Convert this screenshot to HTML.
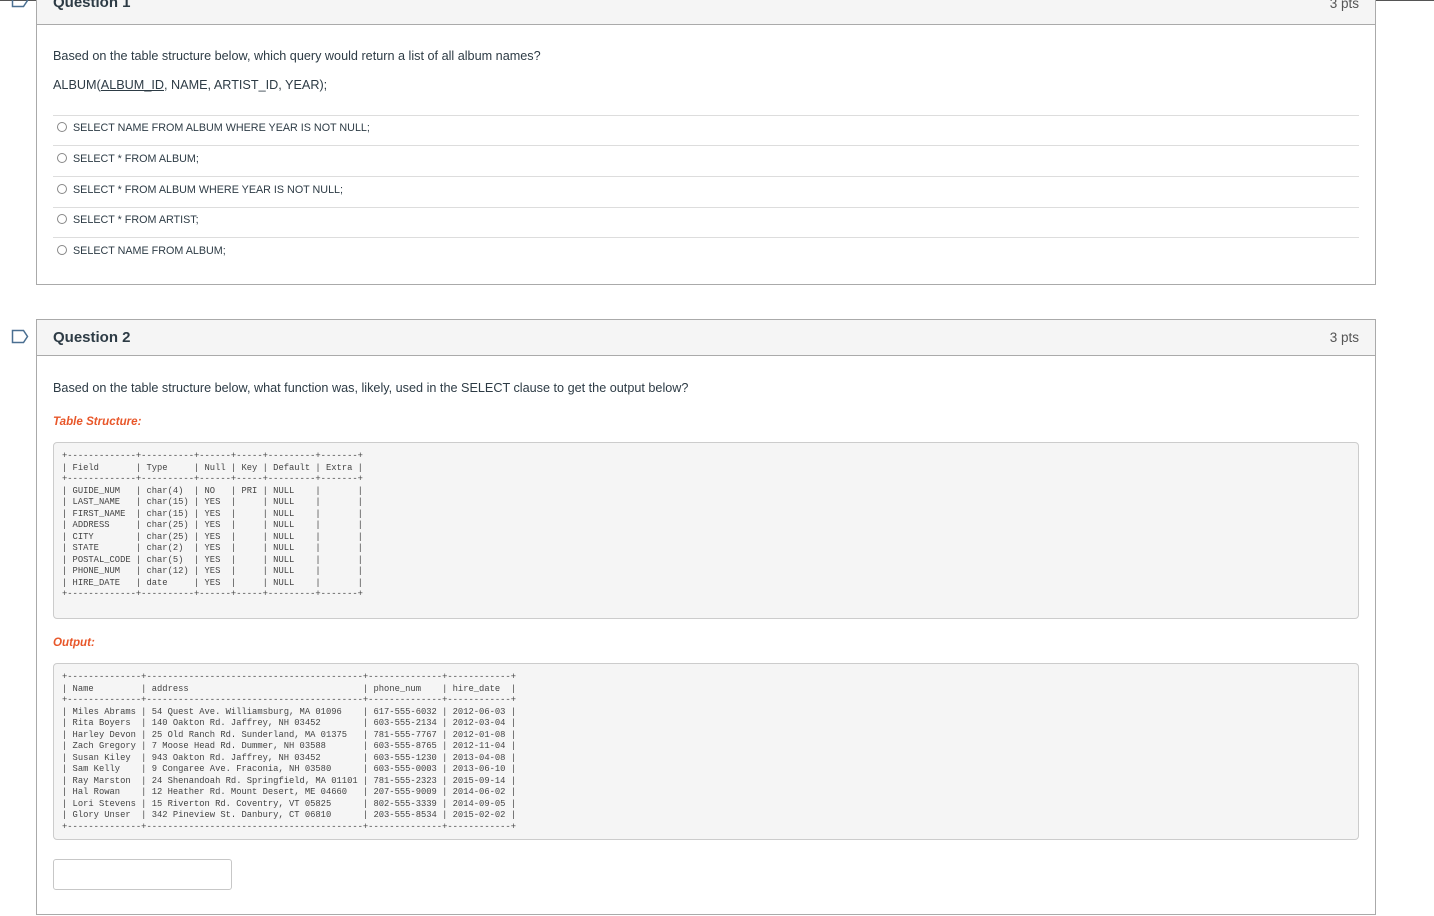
<!DOCTYPE html>
<html><head><meta charset="utf-8"><style>
*{margin:0;padding:0;box-sizing:border-box}
body{width:1434px;height:916px;background:#fff;position:relative;overflow:hidden;font-family:"Liberation Sans",sans-serif;color:#2d3b45}
.abs{position:absolute}
.box{position:absolute;left:36px;width:1340px;border:1px solid #aaa;background:#fff}
.hdr{position:absolute;left:0;right:0;top:0;background:#f5f5f5;border-bottom:1px solid #aaa}
.title{position:absolute;left:16px;font-size:15px;font-weight:bold;color:#2d3b45}
.pts{position:absolute;right:16px;font-size:13.5px;color:#555}
.txt{position:absolute;font-size:12.65px;color:#2d3b45;white-space:nowrap}
.sep{position:absolute;left:53px;width:1306px;height:1px;background:#ddd}
.opt{position:absolute;left:57px;font-size:10.75px;white-space:nowrap;color:#2d3b45}
.opt i{display:inline-block;width:10px;height:10px;border:1px solid #888;border-radius:50%;vertical-align:-1px;margin-right:6px}
.pre{position:absolute;left:53px;width:1306px;background:#f5f5f5;border:1px solid #ccc;border-radius:4px}
pre{position:absolute;left:8px;font-family:"Liberation Mono",monospace;font-size:8.8px;line-height:11.5px;color:#444}
.red{position:absolute;left:53px;color:#e8572a;font-style:italic;font-weight:bold;font-size:11.6px}
</style></head><body>
<div class="abs" style="left:0;top:0;width:1434px;height:1px;background:#555"></div>
<svg class="abs" style="left:11px;top:-7px" width="18" height="15"><path d="M1.5 1.5h11l4 6-4 6h-11z" fill="none" stroke="#4a6f91" stroke-width="1.5"/></svg>
<div class="box" style="top:-14px;height:299px">
 <div class="hdr" style="height:38px"><div class="title" style="top:7px">Question 1</div><div class="pts" style="top:9px">3 pts</div></div>
</div>
<div class="txt" style="left:53px;top:49px">Based on the table structure below, which query would return a list of all album names?</div>
<div class="txt" style="left:53px;top:78px">ALBUM(<u>ALBUM_ID</u>, NAME, ARTIST_ID, YEAR);</div>
<div class="sep" style="top:115px"></div>
<div class="opt" style="top:122px"><i></i>SELECT NAME FROM ALBUM WHERE YEAR IS NOT NULL;</div>
<div class="sep" style="top:145px"></div>
<div class="opt" style="top:153px"><i></i>SELECT * FROM ALBUM;</div>
<div class="sep" style="top:176px"></div>
<div class="opt" style="top:184px"><i></i>SELECT * FROM ALBUM WHERE YEAR IS NOT NULL;</div>
<div class="sep" style="top:207px"></div>
<div class="opt" style="top:214px"><i></i>SELECT * FROM ARTIST;</div>
<div class="sep" style="top:237px"></div>
<div class="opt" style="top:245px"><i></i>SELECT NAME FROM ALBUM;</div>

<svg class="abs" style="left:11px;top:329px" width="18" height="15"><path d="M1.5 1.5h11l4 6-4 6h-11z" fill="none" stroke="#4a6f91" stroke-width="1.5"/></svg>
<div class="box" style="top:319px;height:596px">
 <div class="hdr" style="height:36px"><div class="title" style="top:9px">Question 2</div><div class="pts" style="top:10px">3 pts</div></div>
</div>
<div class="txt" style="left:53px;top:381px">Based on the table structure below, what function was, likely, used in the SELECT clause to get the output below?</div>
<div class="red" style="top:415px">Table Structure:</div>
<div class="pre" style="top:442px;height:177px"><pre style="top:8px">+-------------+----------+------+-----+---------+-------+
| Field       | Type     | Null | Key | Default | Extra |
+-------------+----------+------+-----+---------+-------+
| GUIDE_NUM   | char(4)  | NO   | PRI | NULL    |       |
| LAST_NAME   | char(15) | YES  |     | NULL    |       |
| FIRST_NAME  | char(15) | YES  |     | NULL    |       |
| ADDRESS     | char(25) | YES  |     | NULL    |       |
| CITY        | char(25) | YES  |     | NULL    |       |
| STATE       | char(2)  | YES  |     | NULL    |       |
| POSTAL_CODE | char(5)  | YES  |     | NULL    |       |
| PHONE_NUM   | char(12) | YES  |     | NULL    |       |
| HIRE_DATE   | date     | YES  |     | NULL    |       |
+-------------+----------+------+-----+---------+-------+</pre></div>
<div class="red" style="top:636px">Output:</div>
<div class="pre" style="top:663px;height:177px"><pre style="top:8px">+--------------+-----------------------------------------+--------------+------------+
| Name         | address                                 | phone_num    | hire_date  |
+--------------+-----------------------------------------+--------------+------------+
| Miles Abrams | 54 Quest Ave. Williamsburg, MA 01096    | 617-555-6032 | 2012-06-03 |
| Rita Boyers  | 140 Oakton Rd. Jaffrey, NH 03452        | 603-555-2134 | 2012-03-04 |
| Harley Devon | 25 Old Ranch Rd. Sunderland, MA 01375   | 781-555-7767 | 2012-01-08 |
| Zach Gregory | 7 Moose Head Rd. Dummer, NH 03588       | 603-555-8765 | 2012-11-04 |
| Susan Kiley  | 943 Oakton Rd. Jaffrey, NH 03452        | 603-555-1230 | 2013-04-08 |
| Sam Kelly    | 9 Congaree Ave. Fraconia, NH 03580      | 603-555-0003 | 2013-06-10 |
| Ray Marston  | 24 Shenandoah Rd. Springfield, MA 01101 | 781-555-2323 | 2015-09-14 |
| Hal Rowan    | 12 Heather Rd. Mount Desert, ME 04660   | 207-555-9009 | 2014-06-02 |
| Lori Stevens | 15 Riverton Rd. Coventry, VT 05825      | 802-555-3339 | 2014-09-05 |
| Glory Unser  | 342 Pineview St. Danbury, CT 06810      | 203-555-8534 | 2015-02-02 |
+--------------+-----------------------------------------+--------------+------------+</pre></div>
<div class="abs" style="left:53px;top:859px;width:179px;height:31px;border:1px solid #c7c7c7;border-radius:3px;background:#fff"></div>
</body></html>
